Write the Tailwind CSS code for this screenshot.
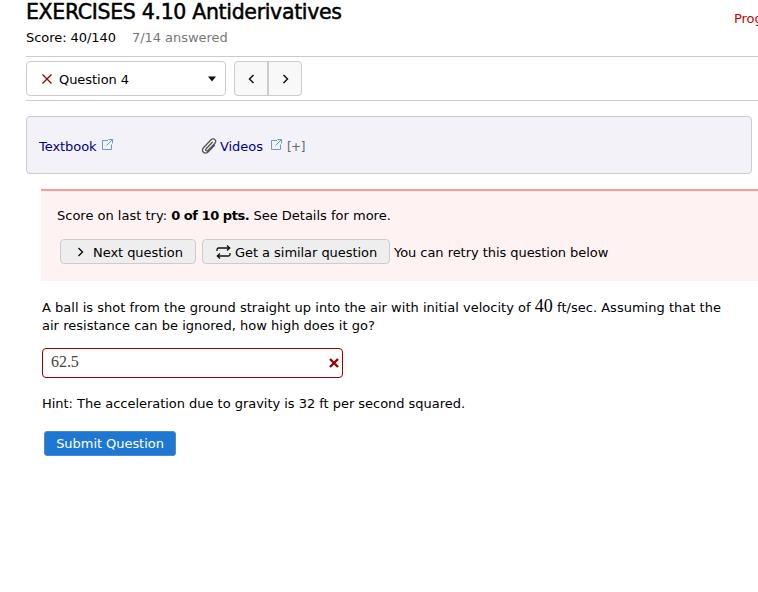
<!DOCTYPE html>
<html>
<head>
<meta charset="utf-8">
<script src="https://cdn.jsdelivr.net/npm/@tailwindcss/browser@4"></script>
</head>
<body class="bg-white">
<div class="h-[592px] w-[758px] overflow-hidden font-['DejaVu_Sans',sans-serif] text-[13px] text-black tracking-[-0.05px]">
  <div class="ml-[26px] flex h-[57px] border-b border-[#cccccc]">
    <div class="w-[708px] shrink-0">
      <h1 class="h-[25px] text-[20.5px] font-normal leading-[25px] tracking-[-0.33px] [-webkit-text-stroke:0.5px_black]">EXERCISES 4.10 Antiderivatives</h1>
      <div class="mt-[4px] flex gap-[16px] leading-[18px]"><span>Score: 40/140</span><span class="text-[#777777]">7/14 answered</span></div>
    </div>
    <div class="mt-[10px] shrink-0 whitespace-nowrap leading-[18px] text-[#cc0000]">Progress</div>
  </div>
  <div class="ml-[26px] flex h-[44px] items-center gap-[8px] border-b border-[#cccccc]">
    <div class="flex h-[35px] w-[200px] items-center rounded-[4px] border border-[#cccccc] pl-[14px] pr-[9px]">
      <svg class="h-[12px] w-[12px] text-[#990000]" viewBox="0 0 12 12" fill="none" stroke="currentColor" stroke-width="1.3"><path d="M1.5 1.5 10.5 10.5M10.5 1.5 1.5 10.5"/></svg>
      <span class="ml-[6px] flex-1 pt-[2px]">Question 4</span>
      <svg class="h-[6px] w-[8px]" viewBox="0 0 8 6" fill="#111"><path d="M0 .5h8L4 5.5z"/></svg>
    </div>
    <div class="flex h-[35px] w-[68px] rounded-[4px] border border-[#cccccc] bg-[#f8f8f8]">
      <div class="flex flex-1 items-center justify-center border-r-2 border-[#cccccc]"><svg class="h-[10px] w-[7px]" viewBox="0 0 7 10" fill="none" stroke="#111" stroke-width="1.5"><path d="M5.5 1 1.5 5l4 4"/></svg></div>
      <div class="flex flex-1 items-center justify-center"><svg class="h-[10px] w-[7px]" viewBox="0 0 7 10" fill="none" stroke="#111" stroke-width="1.5"><path d="M1.5 1l4 4-4 4"/></svg></div>
    </div>
  </div>
  <div class="ml-[26px] mt-[15px] flex h-[58px] w-[726px] items-center rounded-[4px] border border-[#cccccc] bg-[#f2f2f8] pl-[12px] pt-[3px]">
    <div class="flex w-[162px] items-center"><span class="text-[#000088]">Textbook</span>
      <svg class="mb-[5px] ml-[5px] h-[11px] w-[11px] text-[#5b8fd0]" viewBox="0 0 11 11" fill="none" stroke="currentColor" stroke-width="0.9"><path d="M6 1.500H.5v9h9V5.500M6.500.5h4v4M10.500.5 4.500 6.500"/></svg>
    </div>
    <svg class="-mt-[1px] h-[16px] w-[16px] text-[#555555]" viewBox="0 0 16 16" fill="none" stroke="currentColor" stroke-width="1.3" stroke-linecap="round"><path d="M11.300 4.300 5.200 10.700c-.7.7-.6 1.400-.1 1.900s1.300.5 1.900-.1l6.700-7c1.200-1.300 1.200-2.900.2-3.900s-2.700-1-3.900.2L2.900 9.300c-1.700 1.800-1.700 3.700-.5 4.900s3.200 1.200 4.900-.5l6.200-6.400"/></svg>
    <span class="ml-[3px] text-[#000088]">Videos</span>
    <svg class="mb-[5px] ml-[8px] h-[11px] w-[11px] text-[#5b8fd0]" viewBox="0 0 11 11" fill="none" stroke="currentColor" stroke-width="0.9"><path d="M6 1.500H.5v9h9V5.500M6.500.5h4v4M10.500.5 4.500 6.500"/></svg>
    <span class="ml-[5px] text-[12px] tracking-[-0.5px] text-[#666666]">[+]</span>
  </div>
  <div class="ml-[41px] mt-[15px] h-[92px] w-[717px] border-t-2 border-[#ff9999] bg-[#fff2f2] pl-[16px] pt-[16px]">
    <div class="leading-[18px] tracking-[0px]">Score on last try: <b class="tracking-[-0.45px]">0 of 10 pts.</b> See Details for more.</div>
    <div class="mt-[14px] flex items-center pl-[3px]">
      <div class="flex h-[25px] w-[136px] items-center rounded-[4px] border border-[#cccccc] bg-[#eeeeee] pl-[16px]">
        <svg class="h-[10px] w-[7px]" viewBox="0 0 7 10" fill="none" stroke="#111" stroke-width="1.4"><path d="M1.500 1l4 4-4 4"/></svg>
        <span class="ml-[9px] pt-[2px]">Next question</span>
      </div>
      <div class="ml-[6px] flex h-[25px] w-[188px] items-center rounded-[4px] border border-[#cccccc] bg-[#eeeeee] pl-[13px]">
        <svg class="h-[14px] w-[15px]" viewBox="0 0 15 14" fill="none" stroke="#111" stroke-width="1.3"><path d="M1 6V4.500C1 3.500 1.700 3 2.500 3H13.500M11 .5 13.700 3 11 5.500M14 8v1.500c0 1-.7 1.500-1.500 1.500H1.500M4 8.500 1.300 11 4 13.500"/></svg>
        <span class="ml-[4px] pt-[2px]">Get a similar question</span>
      </div>
      <span class="ml-[4px] pt-[2px] tracking-[-0.05px]">You can retry this question below</span>
    </div>
  </div>
  <div class="ml-[42px] mt-[16px] w-[690px] leading-[18px] tracking-[0.02px]">A ball is shot from the ground straight up into the air with initial velocity of <span class="font-['Liberation_Serif',serif] text-[18px] leading-none">40</span> ft/sec. Assuming that the air resistance can be ignored, how high does it go?</div>
  <div class="ml-[42px] mt-[13px] flex h-[30px] w-[301px] items-center justify-between rounded-[4px] border border-[#990000] pl-[8px] pr-[3px] font-['Liberation_Serif',serif] text-[16px] text-[#444444]">
    <span class="-mt-[3px]">62.5</span>
    <svg class="h-[10px] w-[10px] text-[#990000]" viewBox="0 0 10 10" fill="none" stroke="currentColor" stroke-width="2.4"><path d="M1 1 9 9M9 1 1 9"/></svg>
  </div>
  <div class="ml-[42px] mt-[17px] leading-[18px] tracking-[-0.03px]">Hint: The acceleration due to gravity is 32 ft per second squared.</div>
  <div class="ml-[44px] mt-[18px] flex h-[25px] w-[132px] items-center justify-center rounded-[3px] border border-[#5588bb] bg-[#1f77d4] pt-[1px] text-white">Submit Question</div>
</div>
</body>
</html>
